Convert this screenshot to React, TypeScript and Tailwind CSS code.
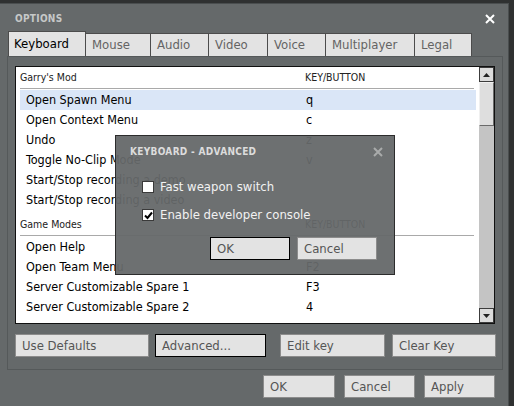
import React from 'react';

const sectionOne: [string, string][] = [
  ['Open Spawn Menu', 'q'],
  ['Open Context Menu', 'c'],
  ['Undo', 'z'],
  ['Toggle No-Clip Mode', 'v'],
  ['Start/Stop recording a demo', ''],
  ['Start/Stop recording a video', ''],
];

// F1 for "Open Help" sits under the dialog's Cancel button, so it is left out
const sectionTwo: [string, string][] = [
  ['Open Help', ''],
  ['Open Team Menu', 'F2'],
  ['Server Customizable Spare 1', 'F3'],
  ['Server Customizable Spare 2', '4'],
];

const tabs = [
  { label: 'Mouse', w: 'w-[65px]' },
  { label: 'Audio', w: 'w-[58px]' },
  { label: 'Video', w: 'w-[59px]' },
  { label: 'Voice', w: 'w-[58px]' },
  { label: 'Multiplayer', w: 'w-[89px]' },
  { label: 'Legal', w: 'w-[57px]' },
];

const CloseX = ({ color, size }: { color: string; size: number }) => (
  <svg width={size} height={size} viewBox="0 0 10 10">
    <path d="M1 1 L9 9 M9 1 L1 9" stroke={color} strokeWidth="2" />
  </svg>
);

const Button = ({ label, w, dark }: { label: string; w: string; dark?: boolean }) => (
  <div
    className={`${w} h-[23px] flex items-center pl-[6px] bg-[#e3e3e3] text-[13px] text-[#555] border ${
      dark ? 'border-black' : 'border-[#8c8c8c]'
    }`}
  >
    {label}
  </div>
);

const Row = ({ name, keyName, selected }: { name: string; keyName: string; selected?: boolean }) => (
  <div className={`h-[20px] flex items-center pt-px text-[12.5px] text-black ${selected ? 'bg-[#dae6f7]' : ''}`}>
    <div className="w-[286px] pl-[6px] whitespace-nowrap">{name}</div>
    <div>{keyName}</div>
  </div>
);

const Header = ({ title, h }: { title: string; h: string }) => (
  <>
    <div className={`${h} flex items-end pb-[2px] text-[10.5px] text-[#222]`}>
      <div className="w-[285px]">{title}</div>
      <div>KEY/BUTTON</div>
    </div>
    <div className="h-px bg-[#a9a9a9] mr-[2px]" />
    <div className="h-px" />
  </>
);

const Checkbox = ({ checked, label }: { checked?: boolean; label: string }) => (
  <div className="flex items-center h-[14px]">
    <div className="w-[12px] h-[12px] bg-white border border-[#3a3a3a] flex items-center justify-center">
      {checked && (
        <svg width="9" height="9" viewBox="0 0 9 9">
          <path d="M1 4.5 L3.5 7 L8 1.5" stroke="black" strokeWidth="2" fill="none" />
        </svg>
      )}
    </div>
    <span className="ml-[6px] text-[13px] text-[#f2f2f2]">{label}</span>
  </div>
);

export default function App() {
  return (
    <div className="relative w-[514px] h-[406px] overflow-hidden bg-[#2f3131] font-['DejaVu_Sans_Condensed','Liberation_Sans',sans-serif]">
      <div className="mt-[3px] mr-[5px] h-[403px] bg-[#65696a] border-t border-r border-[#4a4e4f] flex flex-col">
        {/* title */}
        <div className="h-[27px] flex items-center pl-[15px] pr-[13px] pt-[2px]">
          <span className="text-[10px] font-bold tracking-[0.3px] text-[#c6c8c8]">OPTIONS</span>
          <div className="ml-auto">
            <CloseX color="#ffffff" size={10} />
          </div>
        </div>

        {/* tabs */}
        <div className="h-[25px] flex items-end pl-[8px]">
          <div className="w-[78px] h-[25px] flex items-center pl-[5px] bg-[#e3e3e3] border-l border-t border-r border-[#4c4c4c] text-[13px] text-black">
            Keyboard
          </div>
          {tabs.map((t) => (
            <div
              key={t.label}
              className={`${t.w} h-[23px] flex items-center pl-[6px] bg-[#e3e3e3] border-t border-r border-[#4c4c4c] text-[13px] text-[#646464]`}
            >
              {t.label}
            </div>
          ))}
        </div>

        {/* panel */}
        <div className="ml-[7px] w-[496px] h-[314px] border border-[#55595a] pt-[9px] pl-[7px] flex flex-col">
          <div className="w-[480px] h-[258px] bg-white border border-[#111] flex">
            <div className="flex-1 pl-[4px] pr-[3px]">
              <Header title="Garry's Mod" h="h-[21px]" />
              {sectionOne.map(([n, k], i) => (
                <Row key={n} name={n} keyName={k} selected={i === 0} />
              ))}
              <Header title="Game Modes" h="h-[25px]" />
              {sectionTwo.map(([n, k]) => (
                <Row key={n} name={n} keyName={k} />
              ))}
            </div>
            {/* scrollbar */}
            <div className="w-[15px] flex flex-col bg-[#c4c4c4]">
              <div className="h-[15px] bg-[#dcdcdc] border border-[#3c3c3c] flex items-center justify-center">
                <svg width="7" height="4" viewBox="0 0 7 4">
                  <path d="M0 4 L3.5 0 L7 4 Z" fill="#222" />
                </svg>
              </div>
              <div className="h-[44px] bg-[#dedede] border-l border-t border-[#f0f0f0] border-r-[#6a6a6a] border-b-[#6a6a6a] border-r border-b" />
              <div className="flex-1" />
              <div className="h-[15px] bg-[#dcdcdc] border border-[#3c3c3c] flex items-center justify-center">
                <svg width="7" height="4" viewBox="0 0 7 4">
                  <path d="M0 0 L7 0 L3.5 4 Z" fill="#222" />
                </svg>
              </div>
            </div>
          </div>

          <div className="mt-[10px] flex">
            <Button label="Use Defaults" w="w-[134px]" />
            <div className="ml-[6px]">
              <Button label="Advanced..." w="w-[111px]" dark />
            </div>
            <div className="ml-[14px]">
              <Button label="Edit key" w="w-[105px]" />
            </div>
            <div className="ml-[7px]">
              <Button label="Clear Key" w="w-[104px]" />
            </div>
          </div>
        </div>

        {/* bottom buttons */}
        <div className="mt-[5px] flex pl-[263px] gap-[9px]">
          <Button label="OK" w="w-[72px]" />
          <Button label="Cancel" w="w-[71px]" />
          <Button label="Apply" w="w-[71px]" />
        </div>
      </div>

      {/* advanced dialog */}
      <div className="absolute left-[115px] top-[135px] w-[280px] h-[140px] bg-[rgba(101,104,105,0.95)] border border-[#2c2c2c] flex flex-col">
        <div className="h-[29px] flex items-center pl-[14px] pr-[11px] pt-[2px]">
          <span className="text-[10px] font-bold tracking-[0.3px] text-[#dcdcdc]">KEYBOARD - ADVANCED</span>
          <div className="ml-auto">
            <CloseX color="#a9abab" size={10} />
          </div>
        </div>
        <div className="pl-[26px] mt-[15px] flex flex-col gap-[14px]">
          <Checkbox label="Fast weapon switch" />
          <Checkbox label="Enable developer console" checked />
        </div>
        <div className="mt-[15px] pl-[94px] flex gap-[7px]">
          <Button label="OK" w="w-[80px]" dark />
          <Button label="Cancel" w="w-[80px]" />
        </div>
      </div>
    </div>
  );
}
